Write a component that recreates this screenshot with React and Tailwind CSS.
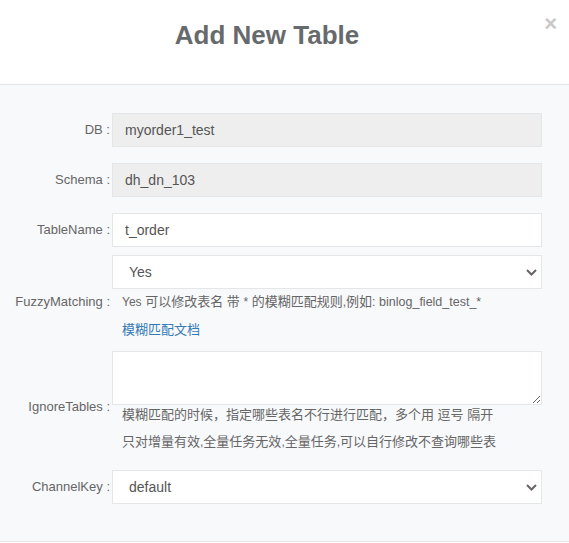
import { useState } from "react";

const font = { fontFamily: '"Liberation Sans", "Noto Sans CJK SC", sans-serif' };

const Chevron = () => (
  <svg
    className="pointer-events-none absolute right-[5px] top-[14px]"
    width="11"
    height="7"
    viewBox="0 0 11 7"
  >
    <path d="M1 1 L5.5 5.5 L10 1" fill="none" stroke="#666" strokeWidth="2" />
  </svg>
);

const Label = ({ children, className = "" }) => (
  <div
    className={`w-[112px] shrink-0 pr-[2px] text-right text-[13px] leading-5 text-[#666] ${className}`}
  >
    {children}
  </div>
);

const AddTable = () => {
  const [tableName, setTableName] = useState("t_order");
  const [fuzzy, setFuzzy] = useState("Yes");
  const [ignore, setIgnore] = useState("");
  const [channel, setChannel] = useState("default");

  return (
    <div className="w-[569px] h-[543px] bg-white" style={font}>
      {/* header */}
      <div className="relative h-[85px] border-b border-[#e5e5e5] bg-white pt-[22px] pr-[35px] text-center">
        <h4 className="text-[26px] font-bold leading-[26px] text-[#676a6c]">
          Add New Table
        </h4>
        <button
          type="button"
          className="absolute right-[12px] top-[13px] text-[22px] font-bold leading-none text-[#c8c8c8]"
        >
          ×
        </button>
      </div>

      {/* body */}
      <div className="border-b border-[#e5e5e5] bg-[#f8f9fb] pt-[28px] pb-[37px] pr-[27px]">
        <div className="flex items-center">
          <Label>DB :</Label>
          <input
            disabled
            value="myorder1_test"
            className="h-[34px] w-full border border-[#e5e6e7] bg-[#eeeeee] px-3 text-[14px] text-[#555]"
          />
        </div>

        <div className="mt-4 flex items-center">
          <Label>Schema :</Label>
          <input
            disabled
            value="dh_dn_103"
            className="h-[34px] w-full border border-[#e5e6e7] bg-[#eeeeee] px-3 text-[14px] text-[#555]"
          />
        </div>

        <div className="mt-4 flex items-center">
          <Label>TableName :</Label>
          <input
            value={tableName}
            onChange={(e) => setTableName(e.target.value)}
            className="h-[34px] w-full border border-[#e5e6e7] bg-white px-3 text-[14px] text-[#555] outline-none"
          />
        </div>

        <div className="mt-2 flex">
          <Label className="mt-[37px]">FuzzyMatching :</Label>
          <div className="w-full">
            <div className="relative">
              <select
                value={fuzzy}
                onChange={(e) => setFuzzy(e.target.value)}
                className="h-[34px] w-full appearance-none border border-[#e5e6e7] bg-white pl-4 text-[14px] text-[#555] outline-none"
              >
                <option>Yes</option>
                <option>No</option>
              </select>
              <Chevron />
            </div>
            <p className="mt-[3px] pl-[10px] text-[13px] leading-5 text-[#666]">
              <span className="text-[12px]">Yes</span> 可以修改表名 带{" "}
              <span className="text-[12px]">*</span> 的模糊匹配规则
              <span className="text-[12px]">,</span>例如
              <span className="text-[12px]">:</span>{" "}
              <span className="text-[12.5px]">binlog_field_test_*</span>
            </p>
            <a
              href="#"
              className="mt-2 block pl-[10px] text-[13px] leading-5 text-[#337ab7]"
            >
              模糊匹配文档
            </a>
          </div>
        </div>

        <div className="mt-[11px] flex">
          <Label className="mt-[46px]">IgnoreTables :</Label>
          <div className="w-full">
            <textarea
              value={ignore}
              onChange={(e) => setIgnore(e.target.value)}
              className="block h-[54px] w-full border border-[#e5e6e7] bg-white px-3 py-1 text-[14px] text-[#555] outline-none"
            />
            <p className="pl-[10px] text-[13px] leading-5 text-[#666]">
              模糊匹配的时候，指定哪些表名不行进行匹配，多个用 逗号 隔开
            </p>
            <p className="mt-[7px] pl-[10px] text-[13px] leading-5 text-[#666]">
              只对增量有效<span className="text-[12px]">,</span>全量任务无效
              <span className="text-[12px]">,</span>全量任务
              <span className="text-[12px]">,</span>可以自行修改不查询哪些表
            </p>
          </div>
        </div>

        <div className="mt-[18px] flex items-center">
          <Label>ChannelKey :</Label>
          <div className="relative w-full">
            <select
              value={channel}
              onChange={(e) => setChannel(e.target.value)}
              className="h-[34px] w-full appearance-none border border-[#e5e6e7] bg-white pl-4 text-[14px] text-[#555] outline-none"
            >
              <option>default</option>
            </select>
            <Chevron />
          </div>
        </div>
      </div>
    </div>
  );
};

export default function App() {
  return <AddTable />;
}
